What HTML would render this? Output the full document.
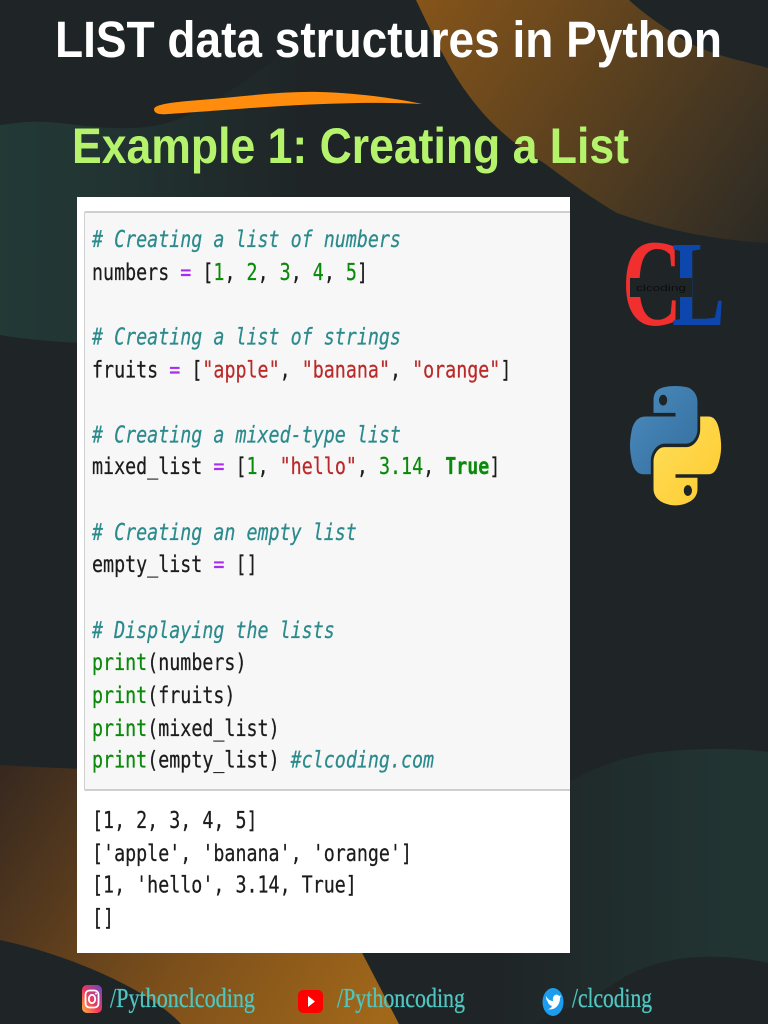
<!DOCTYPE html>
<html lang="en"><head><meta charset="utf-8"><title>LIST data structures in Python</title>
<style>
html,body{margin:0;padding:0;background:#1f2527}
body{width:768px;height:1024px;position:relative;overflow:hidden}
svg{position:absolute;left:0;top:0}
.panel{position:absolute;left:77px;top:197px;width:493px;height:756px;background:#fff}
.box{position:absolute;left:84px;top:211px;width:485px;height:576px;background:#f7f7f7;border:1px solid #cfcfcf;border-right:0;border-top-width:2px;border-bottom-width:2px;border-radius:2px 0 0 2px}
pre{position:absolute;left:92px;margin:0;font:18.33px/25.64px "DejaVu Sans Mono","Liberation Mono",monospace;color:#1c1c1c;white-space:pre;transform:scaleY(1.27);transform-origin:0 0;-webkit-text-stroke:.2px currentColor}
.c{color:#2b8a8c;font-style:italic}.n{color:#0a8a0a}.o{color:#a92cf0}.s{color:#ba2a2a}.k{color:#0a8a0a}.b{color:#0a8a0a;font-weight:bold}
</style></head><body>
<svg width="768" height="1024" viewBox="0 0 768 1024">
<defs>
<linearGradient id="g1" gradientUnits="userSpaceOnUse" x1="420" y1="0" x2="768" y2="240"><stop offset="0" stop-color="#85541a"/><stop offset=".5" stop-color="#59401f"/><stop offset="1" stop-color="#2c2a25"/></linearGradient>
<linearGradient id="g2" gradientUnits="userSpaceOnUse" x1="0" y1="780" x2="380" y2="1024"><stop offset="0" stop-color="#38291f"/><stop offset=".55" stop-color="#7c4f1b"/><stop offset="1" stop-color="#a2681a"/></linearGradient>
<linearGradient id="gl" gradientUnits="userSpaceOnUse" x1="0" y1="0" x2="300" y2="0"><stop offset="0" stop-color="#223936"/><stop offset=".3" stop-color="#223533"/><stop offset="1" stop-color="#1f2527"/></linearGradient>
<linearGradient id="gr" gradientUnits="userSpaceOnUse" x1="500" y1="0" x2="720" y2="0"><stop offset="0" stop-color="#1f2527"/><stop offset="1" stop-color="#213432"/></linearGradient>
<linearGradient id="py1" x1="0" y1="0" x2="1" y2="1"><stop offset="0" stop-color="#4b8bbe"/><stop offset="1" stop-color="#336e9d"/></linearGradient>
<linearGradient id="py2" x1="0" y1="0" x2="1" y2="1"><stop offset="0" stop-color="#ffe05a"/><stop offset="1" stop-color="#fdc92f"/></linearGradient>
<linearGradient id="ig" x1="0" y1="1" x2="1" y2="0"><stop offset="0" stop-color="#fdb53a"/><stop offset=".45" stop-color="#ee3a5b"/><stop offset="1" stop-color="#6a44c8"/></linearGradient>
</defs>
<path d="M323 0C305 28 288 48 270 63C225 95 190 122 147 127C100 132 60 120 30 122C20 122 10 124 0 125V335C30 340 60 342 100 344H200V240H300C310 160 320 60 323 0Z" fill="url(#gl)"/>
<path d="M416 0C435 40 450 70 467 93C490 125 515 145 544 163C580 190 600 203 617 213C670 232 720 240 768 243V68C740 60 710 55 684 40C665 28 645 15 629 0Z" fill="url(#g1)"/>
<path d="M0 765C30 767 60 768 80 769H130V945H358L399 1024H181C150 990 70 955 0 940Z" fill="url(#g2)"/>
<path d="M573 780C600 765 630 755 661 752C700 748 740 748 768 752V963C745 957 710 955 686 958C650 962 625 975 612 985C590 1000 560 1010 534 1024H500V780Z" fill="url(#gr)"/>
<path d="M154 109C155 104 175 102 200 100C240 97 280 91 320 92C355 93 395 98 422 104C380 102 345 103 300 105C260 107 200 112 168 114C158 115 154 113 154 109Z" fill="#ff8c0d"/>
<text x="55" y="57" font-family="Liberation Sans,sans-serif" font-weight="700" font-size="51" fill="#fff" textLength="667" lengthAdjust="spacingAndGlyphs">LIST data structures in Python</text>
<text x="72" y="163" font-family="Liberation Sans,sans-serif" font-weight="700" font-size="50" fill="#b5f36c" textLength="557" lengthAdjust="spacingAndGlyphs">Example 1: Creating a List</text>
<text x="622" y="325" font-family="Liberation Serif,serif" font-weight="700" font-size="124" fill="#f22f2f" textLength="60" lengthAdjust="spacingAndGlyphs">C</text>
<text x="672" y="325" font-family="Liberation Serif,serif" font-weight="700" font-size="122" fill="#0d47ad" textLength="53" lengthAdjust="spacingAndGlyphs">L</text>
<rect x="630" y="278" width="62" height="19" fill="#1f2527"/>
<text x="661" y="291" text-anchor="middle" font-family="Liberation Sans,sans-serif" font-size="9" fill="#0c0d0e" textLength="50" lengthAdjust="spacingAndGlyphs">clcoding</text>
<svg x="630" y="386" width="91" height="119" viewBox="0 0 111 112" preserveAspectRatio="none" overflow="visible">
<path fill="url(#py1)" fill-rule="evenodd" d="M54.9 0C50.3 0 46 .4 42.1 1.1 30.8 3.1 28.7 7.3 28.7 15V25.3H55.5V28.7H18.6C10.8 28.7 4 33.3 1.9 42.3-.6 52.5-.7 58.8 1.9 69.5 3.8 77.4 8.3 83.1 16.1 83.1H25.4V70.8C25.4 62 33 54.2 42.1 54.2H68.9C76.3 54.2 82.3 48 82.3 40.6V15C82.3 7.8 76.2 2.3 68.9 1.1 64.3.3 59.5 0 54.9 0ZM40.4 8.2C43.2 8.2 45.4 10.5 45.4 13.3S43.2 18.4 40.4 18.4 35.4 16.1 35.4 13.3 37.6 8.2 40.4 8.2Z"/>
<path fill="url(#py2)" fill-rule="evenodd" d="M85.6 28.7V40.6C85.6 49.8 77.8 57.5 68.9 57.5H42.1C34.8 57.5 28.7 63.8 28.7 71.1V96.7C28.7 103.9 35 108.2 42.1 110.3 50.6 112.8 58.8 113.2 68.9 110.3 75.6 108.3 82.3 104.4 82.3 96.7V86.4H55.5V83H95.7C103.5 83 106.4 77.6 109.1 69.5 111.9 61.1 111.8 53.1 109.1 42.3 107.2 34.5 103.5 28.7 95.7 28.7ZM70.6 93.3C73.4 93.3 75.6 95.6 75.6 98.4S73.4 103.5 70.6 103.5 65.6 101.2 65.6 98.4 67.8 93.3 70.6 93.3Z"/>
</svg>
<rect x="82" y="985" width="20" height="28" rx="5" fill="url(#ig)"/>
<rect x="85.5" y="990.5" width="13" height="17" rx="4" fill="none" stroke="#fff" stroke-width="1.8"/>
<ellipse cx="92" cy="999" rx="3.2" ry="4.2" fill="none" stroke="#fff" stroke-width="1.8"/>
<circle cx="96" cy="993.5" r="1" fill="#fff"/>
<rect x="298" y="990" width="25" height="23" rx="5" fill="#f00"/>
<path d="M308 996V1007L315 1001.500Z" fill="#fff"/>
<ellipse cx="553" cy="1002" rx="10.500" ry="14" fill="#1c9ded"/>
<path d="M546 996C548 1000 551 1001 553 1001C552 995 557 993 559 996L561 995.500L560 998C560 1005 555 1011 547 1009C550 1009 551 1008 552 1006C549 1005 548 1003 548 1002C547 1001 546 999 546 996Z" fill="#fff"/>
<g font-family="Liberation Serif,serif" font-size="27" fill="#4fc6c0" stroke="#4fc6c0" stroke-width=".3">
<text x="110" y="1007" textLength="145" lengthAdjust="spacingAndGlyphs">/Pythonclcoding</text>
<text x="337" y="1007" textLength="128" lengthAdjust="spacingAndGlyphs">/Pythoncoding</text>
<text x="572" y="1007" textLength="80" lengthAdjust="spacingAndGlyphs">/clcoding</text>
</g>
</svg>
<div class="panel"></div><div class="box"></div>
<pre style="top:224px"><span class="c"># Creating a list of numbers</span>
numbers <span class="o">=</span> [<span class="n">1</span>, <span class="n">2</span>, <span class="n">3</span>, <span class="n">4</span>, <span class="n">5</span>]

<span class="c"># Creating a list of strings</span>
fruits <span class="o">=</span> [<span class="s">"apple"</span>, <span class="s">"banana"</span>, <span class="s">"orange"</span>]

<span class="c"># Creating a mixed-type list</span>
mixed_list <span class="o">=</span> [<span class="n">1</span>, <span class="s">"hello"</span>, <span class="n">3.14</span>, <span class="b">True</span>]

<span class="c"># Creating an empty list</span>
empty_list <span class="o">=</span> []

<span class="c"># Displaying the lists</span>
<span class="k">print</span>(numbers)
<span class="k">print</span>(fruits)
<span class="k">print</span>(mixed_list)
<span class="k">print</span>(empty_list) <span class="c">#clcoding.com</span></pre>
<pre style="top:805px">[1, 2, 3, 4, 5]
['apple', 'banana', 'orange']
[1, 'hello', 3.14, True]
[]</pre>
</body></html>
